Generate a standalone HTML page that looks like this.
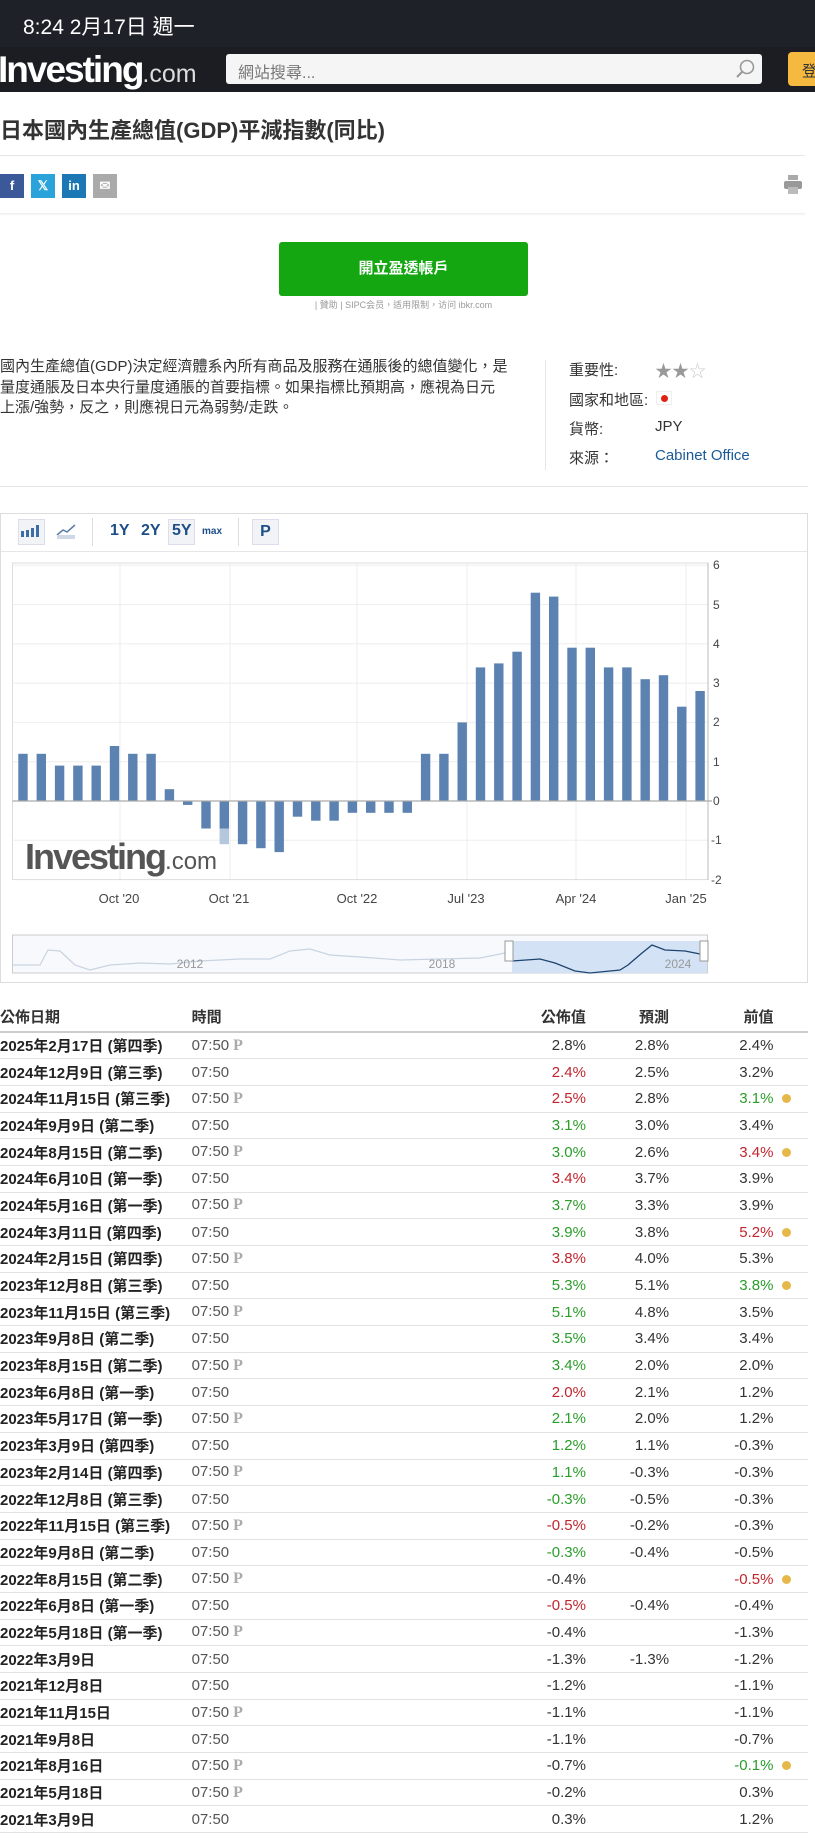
<!DOCTYPE html>
<html><head><meta charset="utf-8"><style>
*{margin:0;padding:0;box-sizing:border-box}
body{width:815px;height:1840px;overflow:hidden;background:#fff;font-family:"Liberation Sans","Noto Sans CJK TC",sans-serif;color:#333;position:relative}
.abs{position:absolute}
.status{left:0;top:0;width:815px;height:47px;background:#1f2129;color:#fff;font-size:21px;padding:11px 0 0 23px}
.hdr{left:0;top:47px;width:815px;height:45px;background:#1c1d22}
.logo{left:-2px;top:49px;color:#fff;font-size:37px;font-weight:bold;letter-spacing:-2px}
.logo span{font-size:25px;font-weight:normal;letter-spacing:0;color:#ddd}
.search{left:226px;top:54px;width:536px;height:30px;background:#f5f5f5;border-radius:3px;color:#777;font-size:16px;padding:5px 0 0 12px}
.btnor{left:788px;top:52px;width:40px;height:34px;background:#f5b940;border-radius:4px;color:#333;font-size:15px;padding:8px 0 0 14px}
.title{left:0;top:113px;font-size:22px;font-weight:bold;color:#333}
.soc{top:174px;width:24px;height:24px;color:#fff;font-size:13px;text-align:center;line-height:24px;font-weight:bold}
.green{left:279px;top:242px;width:249px;height:54px;background:#14a712;border-radius:3px;color:#fff;font-weight:bold;font-size:15px;text-align:center;line-height:54px}
.desc{left:0;top:357px;width:508px;font-size:15px;line-height:20.5px;color:#333}
.lab{left:569px;font-size:15px;color:#333}
.val{left:655px;font-size:15px;color:#333}
table{position:absolute;left:0;top:1001px;width:808px;border-collapse:collapse;font-size:15px}
td,th{height:26.7px;border-bottom:1px solid #e2e2e2;padding:0;white-space:nowrap}
th{font-weight:bold;text-align:left;border-bottom:2px solid #ccc;height:31px}
td.d{font-weight:bold;color:#222;width:189px}
td.t{color:#555;width:200px}
td.n{text-align:right;color:#333}
.P{color:#aaa;font-family:"Liberation Serif",serif;font-weight:bold;font-size:16px;margin-left:4px}
.r{color:#c0262d!important}.g{color:#2a9d2a!important}
.dot{display:inline-block;width:9px;height:9px;border-radius:50%;background:#e6b84a}
</style></head><body>
<div class="abs status">8:24 2月17日 週一</div>
<div class="abs hdr"></div>
<div class="abs logo">Investing<span>.com</span></div>
<div class="abs search">網站搜尋...</div>
<svg class="abs" style="left:734px;top:58px" width="22" height="22"><circle cx="13" cy="9" r="6.5" fill="none" stroke="#999" stroke-width="1.6"/><line x1="8.5" y1="13.5" x2="3" y2="19" stroke="#999" stroke-width="2"/></svg>
<div class="abs btnor">登</div>
<div class="abs title">日本國內生產總值(GDP)平減指數(同比)</div>
<div class="abs" style="left:0;top:155px;width:805px;height:1px;background:#e6e6e6"></div>
<div class="abs soc" style="left:0;background:#3b5998">f</div>
<div class="abs soc" style="left:31px;background:#2aa3db">𝕏</div>
<div class="abs soc" style="left:62px;background:#1b78b5">in</div>
<div class="abs soc" style="left:93px;background:#aaa">✉</div>
<svg class="abs" style="left:784px;top:175px" width="18" height="20"><rect x="4" y="0" width="10" height="5" fill="#aaa"/><rect x="0" y="6" width="18" height="8" rx="2" fill="#999"/><rect x="4" y="12" width="10" height="7" fill="#bbb"/></svg>
<div class="abs" style="left:0;top:213px;width:805px;height:3px;background:linear-gradient(#ececec,#fff)"></div>
<div class="abs green">開立盈透帳戶</div>
<div class="abs" style="left:279px;top:298px;width:249px;text-align:center;font-size:9px;color:#999">| 贊助 | SIPC会员，适用限制，访问 ibkr.com</div>
<div class="abs desc">國內生產總值(GDP)決定經濟體系內所有商品及服務在通脹後的總值變化，是量度通脹及日本央行量度通脹的首要指標。如果指標比預期高，應視為日元上漲/強勢，反之，則應視日元為弱勢/走跌。</div>
<div class="abs" style="left:545px;top:360px;width:1px;height:110px;background:#e6e6e6"></div>
<div class="abs lab" style="top:359px">重要性:</div><div class="abs val" style="top:357px;color:#999;font-size:17px">★★<span style="color:#ccc">☆</span></div>
<div class="abs lab" style="top:389px">國家和地區:</div><div class="abs" style="left:656px;top:391px;width:16px;height:14px;background:#fff;border:1px solid #eee"><div style="margin:3px auto;width:7px;height:7px;border-radius:50%;background:#d21"></div></div>
<div class="abs lab" style="top:418px">貨幣:</div><div class="abs val" style="top:418px">JPY</div>
<div class="abs lab" style="top:447px">來源：</div><div class="abs val" style="top:447px;color:#1a5a96">Cabinet Office</div>
<div class="abs" style="left:0;top:486px;width:808px;height:1px;background:#e6e6e6"></div>

<div class="abs" style="left:0;top:513px;width:808px;height:470px;border:1px solid #ddd"></div>
<div class="abs" style="left:18px;top:519px;width:27px;height:26px;background:#f1f3f6;border:1px solid #dde"></div>
<svg class="abs" style="left:20px;top:524px" width="24" height="16"><rect x="1" y="7" width="3" height="6" fill="#3c6ea5"/><rect x="6" y="6" width="3" height="7" fill="#3c6ea5"/><rect x="11" y="4" width="3" height="9" fill="#3c6ea5"/><rect x="16" y="1" width="3" height="12" fill="#3c6ea5"/></svg>
<svg class="abs" style="left:55px;top:522px" width="24" height="18"><path d="M2 13 L8 8 L12 10 L20 3" fill="none" stroke="#5a7ea8" stroke-width="1.5"/><rect x="2" y="13" width="18" height="4" fill="#cfd9e6"/></svg>
<div class="abs" style="left:92px;top:518px;width:1px;height:28px;background:#ddd"></div>
<div class="abs" style="left:110px;top:522px;font-size:16px;color:#1c4f86;font-weight:bold">1Y</div>
<div class="abs" style="left:141px;top:522px;font-size:16px;color:#1c4f86;font-weight:bold">2Y</div>
<div class="abs" style="left:168px;top:519px;width:27px;height:26px;background:#f1f3f6;border:1px solid #dde"></div>
<div class="abs" style="left:172px;top:522px;font-size:16px;color:#1c4f86;font-weight:bold">5Y</div>
<div class="abs" style="left:202px;top:526px;font-size:10px;color:#1c4f86;font-weight:bold">max</div>
<div class="abs" style="left:238px;top:518px;width:1px;height:28px;background:#ddd"></div>
<div class="abs" style="left:252px;top:519px;width:27px;height:26px;background:#f1f3f6;border:1px solid #dde;font-size:16px;color:#1c4f86;font-weight:bold;text-align:center;line-height:24px">P</div>
<div class="abs" style="left:1px;top:551px;width:806px;height:1px;background:#e6e6e6"></div>

<svg class="abs" style="left:0;top:513px" width="808" height="470" font-family="Liberation Sans, sans-serif">
<rect x="12.5" y="50" width="695.5" height="316.6" fill="none" stroke="#ddd"/>
<g stroke="#eee"><line x1="12.5" x2="708" y1="52.2" y2="52.2"/><line x1="12.5" x2="708" y1="91.5" y2="91.5"/><line x1="12.5" x2="708" y1="130.8" y2="130.8"/><line x1="12.5" x2="708" y1="170.1" y2="170.1"/><line x1="12.5" x2="708" y1="209.4" y2="209.4"/><line x1="12.5" x2="708" y1="248.7" y2="248.7"/><line x1="12.5" x2="708" y1="327.3" y2="327.3"/>
<line x1="120" x2="120" y1="50" y2="366"/><line x1="230" x2="230" y1="50" y2="366"/><line x1="357" x2="357" y1="50" y2="366"/><line x1="467" x2="467" y1="50" y2="366"/><line x1="576" x2="576" y1="50" y2="366"/><line x1="686" x2="686" y1="50" y2="366"/></g>
<line x1="708" x2="708" y1="50" y2="367" stroke="#bbb"/>
<text x="25" y="356" font-size="36" font-weight="bold" fill="#555" letter-spacing="-2">Investing<tspan font-size="24" font-weight="normal" letter-spacing="0">.com</tspan></text>
<g fill="#5b82b0">
<rect x="18.3" y="240.8" width="9.4" height="47.2"/><rect x="36.6" y="240.8" width="9.4" height="47.2"/><rect x="54.9" y="252.6" width="9.4" height="35.4"/><rect x="73.2" y="252.6" width="9.4" height="35.4"/><rect x="91.5" y="252.6" width="9.4" height="35.4"/><rect x="109.8" y="233" width="9.4" height="55"/><rect x="128.1" y="240.8" width="9.4" height="47.2"/><rect x="146.4" y="240.8" width="9.4" height="47.2"/><rect x="164.7" y="276.2" width="9.4" height="11.8"/>
<rect x="183" y="288" width="9.4" height="3.9"/><rect x="201.3" y="288" width="9.4" height="27.5"/><rect x="219.6" y="288" width="9.4" height="27.5"/><rect x="237.9" y="288" width="9.4" height="43.2"/><rect x="256.2" y="288" width="9.4" height="47.2"/><rect x="274.5" y="288" width="9.4" height="51.1"/><rect x="292.8" y="288" width="9.4" height="15.7"/><rect x="311.1" y="288" width="9.4" height="19.7"/><rect x="329.4" y="288" width="9.4" height="19.7"/><rect x="347.7" y="288" width="9.4" height="11.8"/><rect x="366" y="288" width="9.4" height="11.8"/><rect x="384.3" y="288" width="9.4" height="11.8"/><rect x="402.6" y="288" width="9.4" height="11.8"/>
<rect x="420.9" y="240.8" width="9.4" height="47.2"/><rect x="439.2" y="240.8" width="9.4" height="47.2"/><rect x="457.5" y="209.4" width="9.4" height="78.6"/><rect x="475.8" y="154.4" width="9.4" height="133.6"/><rect x="494.1" y="150.4" width="9.4" height="137.6"/><rect x="512.4" y="138.7" width="9.4" height="149.3"/><rect x="530.7" y="79.7" width="9.4" height="208.3"/><rect x="549" y="83.6" width="9.4" height="204.4"/><rect x="567.3" y="134.7" width="9.4" height="153.3"/><rect x="585.6" y="134.7" width="9.4" height="153.3"/><rect x="603.9" y="154.4" width="9.4" height="133.6"/><rect x="622.2" y="154.4" width="9.4" height="133.6"/><rect x="640.5" y="166.2" width="9.4" height="121.8"/><rect x="658.8" y="162.2" width="9.4" height="125.8"/><rect x="677.1" y="193.7" width="9.4" height="94.3"/><rect x="695.4" y="178" width="9.4" height="110"/>
</g>
<rect x="219.6" y="315.5" width="9.4" height="15.7" fill="#b4c7dc"/>
<line x1="12.5" x2="712" y1="288" y2="288" stroke="#aaa" stroke-width="1.2"/>
<g font-size="12" fill="#444"><text x="713" y="56">6</text><text x="713" y="96">5</text><text x="713" y="135">4</text><text x="713" y="174">3</text><text x="713" y="213">2</text><text x="713" y="253">1</text><text x="713" y="292">0</text><text x="711" y="331">-1</text><text x="711" y="371">-2</text></g>
<g font-size="13" fill="#444" text-anchor="middle"><text x="119" y="390">Oct '20</text><text x="229" y="390">Oct '21</text><text x="357" y="390">Oct '22</text><text x="466" y="390">Jul '23</text><text x="576" y="390">Apr '24</text><text x="686" y="390">Jan '25</text></g>
<rect x="12.5" y="422" width="695" height="38" fill="#f7f9fc" stroke="#ccc"/>
<rect x="512" y="428" width="195" height="32" fill="#d3e3f5"/>
<path d="M12 452 L40 452 L48 437 L60 438 L75 452 L90 457 L110 452 L140 450 L170 451 L200 448 L240 446 L270 446 L290 438 L310 436 L330 442 L360 444 L400 447 L440 446 L480 445 L505 440" fill="none" stroke="#c8d4e2" stroke-width="1.2"/>
<path d="M512 448 L540 446 L555 450 L575 458 L590 460 L620 457 L628 452 L642 440 L652 432 L665 437 L685 438 L700 441 L707 446" fill="none" stroke="#1e4470" stroke-width="1.3"/>
<g font-size="12" fill="#999" text-anchor="middle"><text x="190" y="455">2012</text><text x="442" y="455">2018</text><text x="678" y="455">2024</text></g>
<rect x="505" y="428" width="8" height="20" fill="#fff" stroke="#999"/><rect x="700" y="428" width="8" height="20" fill="#fff" stroke="#999"/>
</svg>

<table>
<tr><th style="width:189px">公佈日期</th><th>時間</th><th style="text-align:right;width:189px">公佈值</th><th style="text-align:right;width:82px">預測</th><th style="text-align:right;width:103px">前值</th><th style="width:34px"></th></tr>
<tr><td class="d">2025年2月17日 (第四季)</td><td class="t">07:50<span class="P">P</span></td><td class="n">2.8%</td><td class="n">2.8%</td><td class="n">2.4%</td><td></td></tr>
<tr><td class="d">2024年12月9日 (第三季)</td><td class="t">07:50</td><td class="n r">2.4%</td><td class="n">2.5%</td><td class="n">3.2%</td><td></td></tr>
<tr><td class="d">2024年11月15日 (第三季)</td><td class="t">07:50<span class="P">P</span></td><td class="n r">2.5%</td><td class="n">2.8%</td><td class="n g">3.1%</td><td>&nbsp;&nbsp;<span class="dot"></span></td></tr>
<tr><td class="d">2024年9月9日 (第二季)</td><td class="t">07:50</td><td class="n g">3.1%</td><td class="n">3.0%</td><td class="n">3.4%</td><td></td></tr>
<tr><td class="d">2024年8月15日 (第二季)</td><td class="t">07:50<span class="P">P</span></td><td class="n g">3.0%</td><td class="n">2.6%</td><td class="n r">3.4%</td><td>&nbsp;&nbsp;<span class="dot"></span></td></tr>
<tr><td class="d">2024年6月10日 (第一季)</td><td class="t">07:50</td><td class="n r">3.4%</td><td class="n">3.7%</td><td class="n">3.9%</td><td></td></tr>
<tr><td class="d">2024年5月16日 (第一季)</td><td class="t">07:50<span class="P">P</span></td><td class="n g">3.7%</td><td class="n">3.3%</td><td class="n">3.9%</td><td></td></tr>
<tr><td class="d">2024年3月11日 (第四季)</td><td class="t">07:50</td><td class="n g">3.9%</td><td class="n">3.8%</td><td class="n r">5.2%</td><td>&nbsp;&nbsp;<span class="dot"></span></td></tr>
<tr><td class="d">2024年2月15日 (第四季)</td><td class="t">07:50<span class="P">P</span></td><td class="n r">3.8%</td><td class="n">4.0%</td><td class="n">5.3%</td><td></td></tr>
<tr><td class="d">2023年12月8日 (第三季)</td><td class="t">07:50</td><td class="n g">5.3%</td><td class="n">5.1%</td><td class="n g">3.8%</td><td>&nbsp;&nbsp;<span class="dot"></span></td></tr>
<tr><td class="d">2023年11月15日 (第三季)</td><td class="t">07:50<span class="P">P</span></td><td class="n g">5.1%</td><td class="n">4.8%</td><td class="n">3.5%</td><td></td></tr>
<tr><td class="d">2023年9月8日 (第二季)</td><td class="t">07:50</td><td class="n g">3.5%</td><td class="n">3.4%</td><td class="n">3.4%</td><td></td></tr>
<tr><td class="d">2023年8月15日 (第二季)</td><td class="t">07:50<span class="P">P</span></td><td class="n g">3.4%</td><td class="n">2.0%</td><td class="n">2.0%</td><td></td></tr>
<tr><td class="d">2023年6月8日 (第一季)</td><td class="t">07:50</td><td class="n r">2.0%</td><td class="n">2.1%</td><td class="n">1.2%</td><td></td></tr>
<tr><td class="d">2023年5月17日 (第一季)</td><td class="t">07:50<span class="P">P</span></td><td class="n g">2.1%</td><td class="n">2.0%</td><td class="n">1.2%</td><td></td></tr>
<tr><td class="d">2023年3月9日 (第四季)</td><td class="t">07:50</td><td class="n g">1.2%</td><td class="n">1.1%</td><td class="n">-0.3%</td><td></td></tr>
<tr><td class="d">2023年2月14日 (第四季)</td><td class="t">07:50<span class="P">P</span></td><td class="n g">1.1%</td><td class="n">-0.3%</td><td class="n">-0.3%</td><td></td></tr>
<tr><td class="d">2022年12月8日 (第三季)</td><td class="t">07:50</td><td class="n g">-0.3%</td><td class="n">-0.5%</td><td class="n">-0.3%</td><td></td></tr>
<tr><td class="d">2022年11月15日 (第三季)</td><td class="t">07:50<span class="P">P</span></td><td class="n r">-0.5%</td><td class="n">-0.2%</td><td class="n">-0.3%</td><td></td></tr>
<tr><td class="d">2022年9月8日 (第二季)</td><td class="t">07:50</td><td class="n g">-0.3%</td><td class="n">-0.4%</td><td class="n">-0.5%</td><td></td></tr>
<tr><td class="d">2022年8月15日 (第二季)</td><td class="t">07:50<span class="P">P</span></td><td class="n">-0.4%</td><td class="n"></td><td class="n r">-0.5%</td><td>&nbsp;&nbsp;<span class="dot"></span></td></tr>
<tr><td class="d">2022年6月8日 (第一季)</td><td class="t">07:50</td><td class="n r">-0.5%</td><td class="n">-0.4%</td><td class="n">-0.4%</td><td></td></tr>
<tr><td class="d">2022年5月18日 (第一季)</td><td class="t">07:50<span class="P">P</span></td><td class="n">-0.4%</td><td class="n"></td><td class="n">-1.3%</td><td></td></tr>
<tr><td class="d">2022年3月9日</td><td class="t">07:50</td><td class="n">-1.3%</td><td class="n">-1.3%</td><td class="n">-1.2%</td><td></td></tr>
<tr><td class="d">2021年12月8日</td><td class="t">07:50</td><td class="n">-1.2%</td><td class="n"></td><td class="n">-1.1%</td><td></td></tr>
<tr><td class="d">2021年11月15日</td><td class="t">07:50<span class="P">P</span></td><td class="n">-1.1%</td><td class="n"></td><td class="n">-1.1%</td><td></td></tr>
<tr><td class="d">2021年9月8日</td><td class="t">07:50</td><td class="n">-1.1%</td><td class="n"></td><td class="n">-0.7%</td><td></td></tr>
<tr><td class="d">2021年8月16日</td><td class="t">07:50<span class="P">P</span></td><td class="n">-0.7%</td><td class="n"></td><td class="n g">-0.1%</td><td>&nbsp;&nbsp;<span class="dot"></span></td></tr>
<tr><td class="d">2021年5月18日</td><td class="t">07:50<span class="P">P</span></td><td class="n">-0.2%</td><td class="n"></td><td class="n">0.3%</td><td></td></tr>
<tr><td class="d">2021年3月9日</td><td class="t">07:50</td><td class="n">0.3%</td><td class="n"></td><td class="n">1.2%</td><td></td></tr>
</table>
</body></html>
